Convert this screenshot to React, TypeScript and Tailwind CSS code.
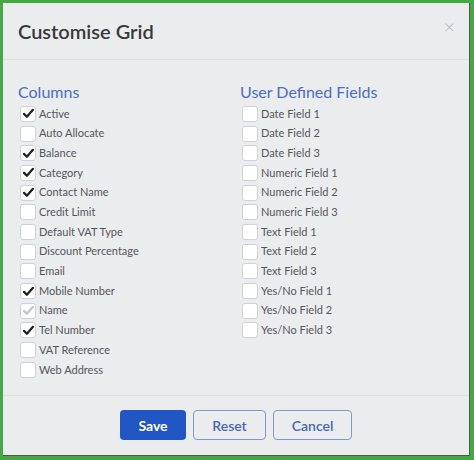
import React from "react";

const columns: { name: string; checked?: boolean; disabled?: boolean }[] = [
  { name: "Active", checked: true },
  { name: "Auto Allocate" },
  { name: "Balance", checked: true },
  { name: "Category", checked: true },
  { name: "Contact Name", checked: true },
  { name: "Credit Limit" },
  { name: "Default VAT Type" },
  { name: "Discount Percentage" },
  { name: "Email" },
  { name: "Mobile Number", checked: true },
  { name: "Name", checked: true, disabled: true },
  { name: "Tel Number", checked: true },
  { name: "VAT Reference" },
  { name: "Web Address" },
];

const userFields = [
  "Date Field 1",
  "Date Field 2",
  "Date Field 3",
  "Numeric Field 1",
  "Numeric Field 2",
  "Numeric Field 3",
  "Text Field 1",
  "Text Field 2",
  "Text Field 3",
  "Yes/No Field 1",
  "Yes/No Field 2",
  "Yes/No Field 3",
];

const CheckRow = ({
  label,
  checked,
  disabled,
}: {
  label: string;
  checked?: boolean;
  disabled?: boolean;
}) => (
  <label className="flex h-[19.7px] items-center gap-[3px]">
    <span className="ml-[2px] flex h-[16px] w-[16px] items-center justify-center rounded-[3px] border border-[#cfd1d6] bg-white">
      {checked && (
        <svg viewBox="0 0 16 16" className="h-[13px] w-[13px]">
          <path
            d="M2.5 8.5 L6 12 L13.5 3.5"
            fill="none"
            stroke={disabled ? "#c4c6ca" : "#1f1f1f"}
            strokeWidth="2.8"
            strokeLinecap="round"
            strokeLinejoin="round"
          />
        </svg>
      )}
    </span>
    <span className="text-[11px] text-[#55565a]">{label}</span>
  </label>
);

export default function App() {
  return (
    <div className="h-[460px] w-[474px] bg-[#44a843] pb-[4px] pl-[3px] pr-[4px] pt-[3px] font-['Lato','Liberation_Sans',sans-serif]">
      <div className="flex h-full flex-col border-b border-r border-[#4b5a4b] bg-[#ebecee]">
        {/* Header */}
        <div className="flex h-[57px] items-center justify-between border-b border-[#dfe0e3] pl-[15px] pr-[14px]">
          <h1 className="text-[20px] font-semibold text-[#38393b]">Customise Grid</h1>
          <span className="-mt-[10px] text-[20px] font-light leading-none text-[#b4b6ba]">×</span>
        </div>

        {/* Body */}
        <div className="flex flex-1 pl-[15px] pt-[22px]">
          <div className="w-[222px]">
            <h2 className="mb-[2px] text-[16px] leading-[20px] text-[#4a6cc6]">Columns</h2>
            {columns.map((c) => (
              <CheckRow key={c.name} label={c.name} checked={c.checked} disabled={c.disabled} />
            ))}
          </div>
          <div>
            <h2 className="mb-[2px] text-[16px] leading-[20px] text-[#4a6cc6]">User Defined Fields</h2>
            {userFields.map((f) => (
              <CheckRow key={f} label={f} />
            ))}
          </div>
        </div>

        {/* Footer */}
        <div className="flex h-[60px] items-center justify-center gap-[7px] border-t border-[#dfe0e3] pb-[1px]">
          <button className="h-[30px] w-[66px] rounded-[4px] bg-[#2256c4] text-[14px] font-bold text-white">
            Save
          </button>
          <button className="h-[30px] w-[73px] rounded-[4px] border-[1.5px] border-[#8496c6] text-[14px] font-semibold text-[#4766b4]">
            Reset
          </button>
          <button className="h-[30px] w-[79px] rounded-[4px] border-[1.5px] border-[#8496c6] text-[14px] font-semibold text-[#4766b4]">
            Cancel
          </button>
        </div>
      </div>
    </div>
  );
}
